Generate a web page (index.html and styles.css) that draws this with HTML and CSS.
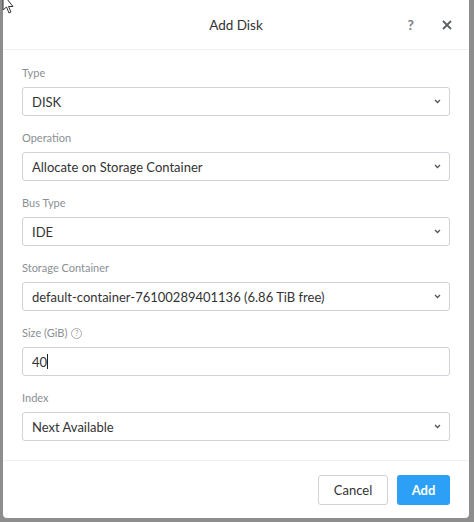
FILE: index.html
```html
<!DOCTYPE html>
<html>
<head>
<meta charset="utf-8">
<link rel="stylesheet" href="styles.css">
</head>
<body>
<svg class="cursor" width="14" height="16" viewBox="0 0 14 16"><path d="M1 -6 L1 10 L4.5 7 L7 13 L9 12 L6.5 6.5 L11 6.5 Z" fill="#fff" stroke="#333" stroke-width="1"/></svg>
<div class="modal">
  <div class="header">
    <div class="title">Add Disk</div>
    <div class="hicons">
      <span class="help">?</span>
      <svg class="close" width="10" height="10" viewBox="0 0 10 10"><path d="M1 1 L9 9 M9 1 L1 9" stroke="#5a5f64" stroke-width="1.8"/></svg>
    </div>
  </div>
  <div class="body">
    <div class="group">
      <div class="label">Type</div>
      <div class="select"><span>DISK</span><svg class="chev" width="7" height="5" viewBox="0 0 7 5"><path d="M1 1 L3.5 3.5 L6 1" fill="none" stroke="#555" stroke-width="1.3"/></svg></div>
    </div>
    <div class="group">
      <div class="label">Operation</div>
      <div class="select"><span>Allocate on Storage Container</span><svg class="chev" width="7" height="5" viewBox="0 0 7 5"><path d="M1 1 L3.5 3.5 L6 1" fill="none" stroke="#555" stroke-width="1.3"/></svg></div>
    </div>
    <div class="group">
      <div class="label">Bus Type</div>
      <div class="select"><span>IDE</span><svg class="chev" width="7" height="5" viewBox="0 0 7 5"><path d="M1 1 L3.5 3.5 L6 1" fill="none" stroke="#555" stroke-width="1.3"/></svg></div>
    </div>
    <div class="group">
      <div class="label">Storage Container</div>
      <div class="select"><span>default-container-76100289401136 (6.86 TiB free)</span><svg class="chev" width="7" height="5" viewBox="0 0 7 5"><path d="M1 1 L3.5 3.5 L6 1" fill="none" stroke="#555" stroke-width="1.3"/></svg></div>
    </div>
    <div class="group">
      <div class="label">Size (GiB) <span class="qcircle">?</span></div>
      <div class="select input"><span>40</span><span class="caret"></span></div>
    </div>
    <div class="group last">
      <div class="label">Index</div>
      <div class="select"><span>Next Available</span><svg class="chev" width="7" height="5" viewBox="0 0 7 5"><path d="M1 1 L3.5 3.5 L6 1" fill="none" stroke="#555" stroke-width="1.3"/></svg></div>
    </div>
  </div>
  <div class="footer">
    <button class="btn cancel">Cancel</button>
    <button class="btn add">Add</button>
  </div>
</div>
</body>
</html>
```
FILE: styles.css
```css
html, body {
  margin: 0;
  padding: 0;
}
body {
  background: #8d8d8d;
  width: 474px;
  height: 522px;
  overflow: hidden;
  font-family: Lato, "Open Sans", "Liberation Sans", sans-serif;
}
.cursor {
  position: absolute;
  left: 2px;
  top: 0;
  z-index: 5;
}
.modal {
  margin-left: 3px;
  width: 466px;
  height: 518px;
  background: #fff;
  border-radius: 0 0 4px 4px;
  display: flex;
  flex-direction: column;
}
.header {
  height: 49px;
  border-bottom: 1px solid #eef0f2;
  display: flex;
  align-items: center;
  justify-content: center;
  position: relative;
}
.title {
  font-size: 13.5px;
  color: #333;
}
.hicons {
  position: absolute;
  right: 17px;
  top: 0;
  height: 49px;
  display: flex;
  align-items: center;
  gap: 28px;
}
.help {
  font-size: 14px;
  font-weight: bold;
  color: #7d8287;
}
.close {
  display: block;
}
.body {
  padding: 16px 19px 0 19px;
}
.group {
  margin-bottom: 15px;
}
.group.last {
  margin-bottom: 19px;
}
.label {
  height: 14px;
  line-height: 14px;
  font-size: 11px;
  color: #8a8f94;
  margin-bottom: 7px;
  display: flex;
  align-items: center;
  gap: 4px;
}
.qcircle {
  display: inline-flex;
  width: 9px;
  height: 9px;
  border: 1px solid #aaa;
  border-radius: 50%;
  font-size: 7px;
  color: #999;
  align-items: center;
  justify-content: center;
  line-height: 1;
}
.select {
  height: 27px;
  border: 1px solid #cfd3d7;
  border-radius: 3px;
  display: flex;
  align-items: center;
  padding: 0 8px 0 9px;
  font-size: 13px;
  color: #333;
}
.select span:first-child {
  flex: 1;
}
.input span:first-child {
  flex: 0 0 auto;
}
.caret {
  width: 1px;
  height: 15px;
  background: #222;
}
.chev {
  display: block;
}
.footer {
  border-top: 1px solid #eef0f2;
  padding: 14px 19px 0 0;
  display: flex;
  justify-content: flex-end;
  gap: 9px;
}
.btn {
  height: 30px;
  border-radius: 3px;
  font-family: Lato, "Open Sans", "Liberation Sans", sans-serif;
  font-size: 13px;
  padding: 0;
}
.cancel {
  width: 70px;
  background: #fff;
  border: 1px solid #cfd3d7;
  color: #333;
}
.add {
  width: 53px;
  background: #2ba0f6;
  border: none;
  color: #fff;
  font-weight: bold;
}
```
